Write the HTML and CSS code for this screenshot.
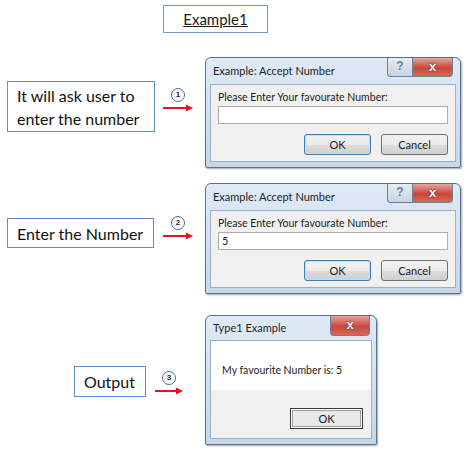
FILE: index.html
```html
<!DOCTYPE html>
<html lang="en">
<head>
    <meta charset="UTF-8">
    <title>Example1 - Accept Number</title>
    <link rel="stylesheet" href="styles.css">
</head>
<body>
    <div class="page">
        <div class="heading"><span>Example1</span></div>

        <!-- Step 1: empty input box -->
        <section class="step step-one">
            <div class="note">It will ask user to<br>enter the number</div>
            <div class="marker">
                <span class="num">1</span>
                <svg class="arrow" width="30" height="8" viewBox="0 0 30 8"><line x1="0" y1="4" x2="24" y2="4" stroke="#e8141b" stroke-width="2"/><polygon points="23,0.5 30,4 23,7.5" fill="#e8141b"/></svg>
            </div>
            <div class="window">
                <div class="titlebar">
                    <span class="caption">Example: Accept Number</span>
                    <div class="tb-buttons">
                        <span class="tb-help">?</span>
                        <span class="tb-close">x</span>
                    </div>
                </div>
                <div class="panel">
                    <div class="prompt">Please Enter Your favourate Number:</div>
                    <div class="textbox"></div>
                    <div class="actions">
                        <span class="btn btn-default">OK</span>
                        <span class="btn">Cancel</span>
                    </div>
                </div>
            </div>
        </section>

        <!-- Step 2: number typed -->
        <section class="step step-two">
            <div class="note">Enter the Number</div>
            <div class="marker">
                <span class="num">2</span>
                <svg class="arrow" width="30" height="8" viewBox="0 0 30 8"><line x1="0" y1="4" x2="24" y2="4" stroke="#e8141b" stroke-width="2"/><polygon points="23,0.5 30,4 23,7.5" fill="#e8141b"/></svg>
            </div>
            <div class="window">
                <div class="titlebar">
                    <span class="caption">Example: Accept Number</span>
                    <div class="tb-buttons">
                        <span class="tb-help">?</span>
                        <span class="tb-close">x</span>
                    </div>
                </div>
                <div class="panel">
                    <div class="prompt">Please Enter Your favourate Number:</div>
                    <div class="textbox">5</div>
                    <div class="actions">
                        <span class="btn btn-default">OK</span>
                        <span class="btn">Cancel</span>
                    </div>
                </div>
            </div>
        </section>

        <!-- Step 3: message box -->
        <section class="step step-three">
            <div class="note">Output</div>
            <div class="marker">
                <span class="num">3</span>
                <svg class="arrow" width="28" height="8" viewBox="0 0 28 8"><line x1="0" y1="4" x2="22" y2="4" stroke="#e8141b" stroke-width="2"/><polygon points="21,0.5 28,4 21,7.5" fill="#e8141b"/></svg>
            </div>
            <div class="window msgbox">
                <div class="titlebar">
                    <span class="caption">Type1 Example</span>
                    <div class="tb-buttons">
                        <span class="tb-close">x</span>
                    </div>
                </div>
                <div class="panel">
                    <div class="message">My favourite Number is: 5</div>
                    <div class="footer">
                        <span class="btn btn-classic">OK</span>
                    </div>
                </div>
            </div>
        </section>
    </div>
</body>
</html>
```

FILE: styles.css
```css
body {
    margin: 0;
    padding: 0;
    background: #fff;
    font-family: 'Lato', sans-serif;
    color: #1b1b1b;
}
.page {
    width: 474px;
    height: 450px;
    overflow: hidden;
}

/* heading box */
.heading {
    box-sizing: border-box;
    width: 105px;
    height: 28px;
    margin: 5px 0 0 163px;
    border: 1px solid #6d9bd1;
    display: flex;
    align-items: center;
    justify-content: center;
    font-size: 15px;
}
.heading span {
    text-decoration: underline;
}

/* rows */
.step {
    display: flex;
    align-items: flex-start;
}
.step-one {
    margin-top: 24px;
}
.step-two {
    margin-top: 15px;
}
.step-three {
    margin-top: 21px;
}

.note {
    box-sizing: border-box;
    border: 1px solid #5f8fcb;
    font-size: 16px;
    line-height: 23px;
    color: #111;
    padding-left: 9px;
    display: flex;
    align-items: center;
}
.step-one .note {
    margin: 24px 0 0 7px;
    width: 148px;
    height: 51px;
}
.step-two .note {
    margin: 35px 0 0 7px;
    width: 147px;
    height: 30px;
}
.step-three .note {
    margin: 51px 0 0 74px;
    width: 72px;
    height: 31px;
}

.marker {
    display: flex;
    flex-direction: column;
    align-items: center;
    gap: 2px;
}
.step-one .marker {
    margin: 31px 12px 0 8px;
    width: 30px;
}
.step-two .marker {
    margin: 33px 12px 0 9px;
    width: 30px;
}
.step-three .marker {
    margin: 56px 22px 0 9px;
    width: 28px;
}
.num {
    box-sizing: border-box;
    width: 14px;
    height: 14px;
    border: 1px solid #4a6c9b;
    border-radius: 50%;
    font-family: 'Liberation Sans', sans-serif;
    font-size: 8px;
    font-weight: bold;
    line-height: 12px;
    text-align: center;
    color: #222;
}
.arrow {
    display: block;
}

/* windows 7 basic dialog */
.window {
    box-sizing: border-box;
    width: 256px;
    border: 1px solid #5d7188;
    border-radius: 6px 6px 2px 2px;
    background: linear-gradient(#dfeaf6, #c5d7eb);
    padding: 0 4px 5px;
    box-shadow: 1px 1px 2px rgba(0, 0, 0, 0.35);
}
.titlebar {
    height: 26px;
    display: flex;
    align-items: flex-start;
}
.caption {
    font-size: 11px;
    line-height: 26px;
    padding-left: 3px;
    color: #1e1e1e;
}
.tb-buttons {
    margin-left: auto;
    margin-right: 3px;
    display: flex;
}
.tb-help, .tb-close {
    box-sizing: border-box;
    height: 19px;
    border: 1px solid #6f7f93;
    border-top: none;
    text-align: center;
    font-family: 'Liberation Sans', sans-serif;
    font-weight: bold;
    line-height: 17px;
}
.tb-help {
    width: 25px;
    border-radius: 0 0 0 4px;
    border-right: none;
    background: linear-gradient(#e6edf5, #c7d3e1);
    color: #6c7e96;
    font-size: 12px;
}
.tb-close {
    width: 41px;
    border-radius: 0 0 4px 0;
    background: linear-gradient(#e6a49c, #c9473b 55%, #d46a5c);
    color: #fff;
    font-size: 13px;
    text-shadow: 0 0 2px #5a1010;
}

.panel {
    box-sizing: border-box;
    height: 78px;
    border: 1px solid #9aaec6;
    background: #f0f0f0;
    padding: 0 7px;
}
.prompt {
    font-size: 10.5px;
    line-height: 15px;
    padding-top: 5px;
}
.textbox {
    box-sizing: border-box;
    height: 18px;
    margin-top: 1px;
    border: 1px solid #abadb3;
    background: #fff;
    font-size: 11px;
    line-height: 16px;
    padding-left: 3px;
}
.actions {
    display: flex;
    justify-content: flex-end;
    gap: 10px;
    margin-top: 10px;
}
.btn {
    box-sizing: border-box;
    width: 67px;
    height: 21px;
    border: 1px solid #707070;
    border-radius: 3px;
    background: linear-gradient(#f2f2f2, #ebebeb 50%, #dddddd 51%, #cfcfcf);
    font-size: 11px;
    line-height: 19px;
    text-align: center;
}
.btn-default {
    border-color: #3c7fb1;
    box-shadow: inset 0 0 0 1px #b8e0f6;
}

/* message box */
.msgbox {
    width: 172px;
}
.msgbox .titlebar {
    height: 24px;
}
.msgbox .caption {
    line-height: 24px;
}
.msgbox .tb-buttons {
    margin-right: 2px;
}
.msgbox .tb-close {
    width: 40px;
    height: 20px;
    border-radius: 0 0 4px 4px;
    border-right: 1px solid #6f7f93;
}
.msgbox .panel {
    height: 99px;
    padding: 0;
    background: #fff;
}
.message {
    height: 49px;
    padding: 22px 0 0 11px;
    box-sizing: border-box;
    font-size: 10.5px;
    line-height: 14px;
}
.footer {
    height: 48px;
    background: #f0f0f0;
    display: flex;
    justify-content: flex-end;
    padding: 18px 8px 0 0;
    box-sizing: border-box;
}
.btn-classic {
    width: 73px;
    border-radius: 0;
    border: 1px solid #3a3a3a;
    box-shadow: inset 0 0 0 1px #fdfdfd, inset 0 0 0 2px #a0a0a0;
    background: #e9e9e9;
}
```
